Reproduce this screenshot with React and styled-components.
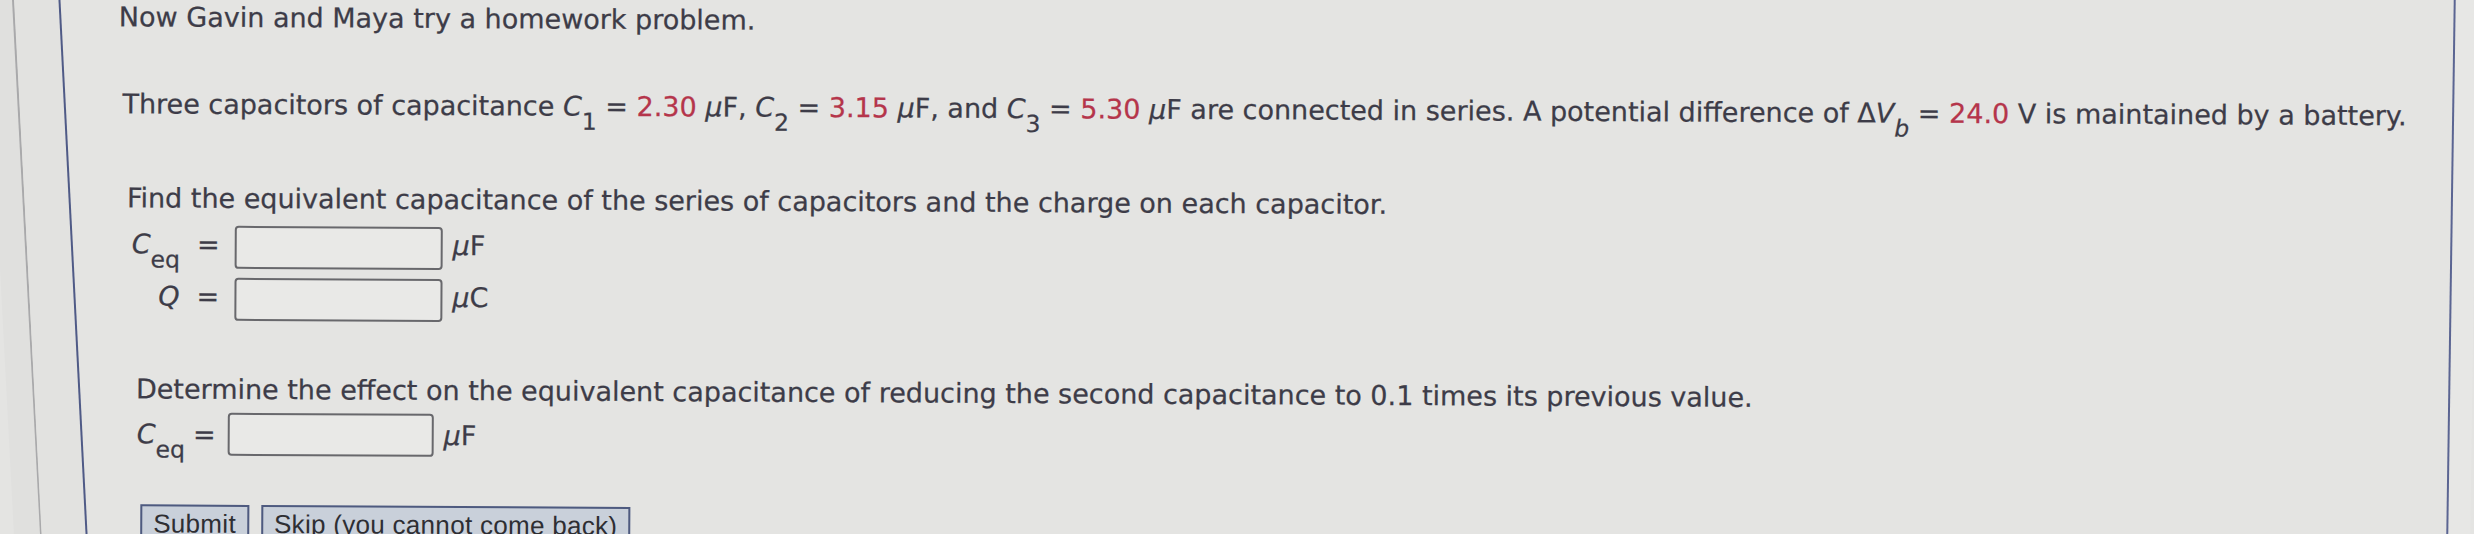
import React from "react";
import styled, { createGlobalStyle } from "styled-components";

const GlobalStyle = createGlobalStyle`
  html, body { margin: 0; padding: 0; background: #e4e4e2; }
  body { font-family: "DejaVu Sans", Verdana, sans-serif; }
`;

const Page = styled.div`
  display: flex;
  width: 2474px;
  height: 534px;
  overflow: hidden;
  background: #e4e4e2;
`;

const Gutter = styled.div`
  flex: none;
  width: ${(p) => p.$w}px;
  background: ${(p) => p.$bg};
  border-right: 2px solid ${(p) => p.$line};
  transform: skewX(${(p) => p.$skew}deg);
`;

const RightGutter = styled.div`
  flex: none;
  width: 22px;
  background: #e7e7e5;
  border-left: 2px solid #5b6592;
  transform: skewX(-0.8deg);
`;

const Content = styled.div`
  flex: 1;
  min-width: 0;
  display: flex;
  flex-direction: column;
  align-items: flex-start;
  padding: 1px 0 0 45px;
  color: #3d3c48;
  -webkit-text-stroke: 0.25px #3d3c48;
  font-size: 27px;
  transform: rotate(0.3deg);
  transform-origin: 0 0;
`;

const Text = styled.p`
  margin: ${(p) => p.$mt}px 0 0 ${(p) => p.$indent}px;
  font-size: 27px;
  line-height: 32px;
  white-space: nowrap;
`;

const Var = styled.i`
  font-style: italic;
`;

const Sub = styled.span`
  font-size: 0.87em;
  position: relative;
  top: 0.6em;
  line-height: 0;
  font-style: ${(p) => (p.$italic ? "italic" : "normal")};
`;

const Num = styled.span`
  color: #b5354b;
  -webkit-text-stroke: 0.25px #b5354b;
`;

const Label = styled.span`
  justify-self: end;
  font-size: 27px;
  line-height: 32px;
  white-space: nowrap;
`;

const Eq = styled.span`
  font-size: 27px;
  line-height: 32px;
  padding: 0 ${(p) => p.$r}px 0 ${(p) => p.$l}px;
`;

const Unit = styled.span`
  font-size: 27px;
  line-height: 32px;
  padding-left: 10px;
  white-space: nowrap;
`;

const Field = styled.div`
  box-sizing: border-box;
  width: 100%;
  height: 43px;
  border: 2px solid #68686c;
  border-radius: 4px;
  background: #e9e9e7;
`;

const Form = styled.div`
  display: grid;
  grid-template-columns: auto auto ${(p) => p.$box}px auto;
  grid-auto-rows: 43px;
  row-gap: 9px;
  align-items: center;
  margin: ${(p) => p.$mt}px 0 0 ${(p) => p.$indent}px;

  & > ${Label}, & > ${Eq}, & > ${Unit} {
    position: relative;
    top: -${(p) => p.$lift}px;
  }
`;

const ButtonRow = styled.div`
  display: flex;
  gap: 12px;
  margin: ${(p) => p.$mt}px 0 0 ${(p) => p.$indent}px;
`;

const Button = styled.button`
  font-family: "Liberation Sans", Arial, sans-serif;
  font-size: 26px;
  letter-spacing: 0.3px;
  color: #2e2e33;
  -webkit-text-stroke: 0;
  background: #c9d0da;
  border: 2px solid #4e5a7f;
  padding: 2px 11px 6px;
  margin: 0;
  line-height: normal;
  white-space: nowrap;
`;

const MuF = ({ unit = "F" }) => (
  <>
    <Var>µ</Var>
    {unit}
  </>
);

export default function App() {
  return (
    <>
      <GlobalStyle />
      <Page>
        <Gutter $w={26} $bg="#e0e0de" $line="#a9a9ab" $skew={3} />
        <Gutter $w={44} $bg="#e2e2e0" $line="#4f5a86" $skew={2.9} />
        <Content>
          <Text $mt={0} $indent={0}>
            Now Gavin and Maya try a homework problem.
          </Text>
          <Text $mt={55} $indent={4}>
            Three capacitors of capacitance <Var>C</Var>
            <Sub>1</Sub> = <Num>2.30</Num> <MuF />, <Var>C</Var>
            <Sub>2</Sub> = <Num>3.15</Num> <MuF />, and <Var>C</Var>
            <Sub>3</Sub> = <Num>5.30</Num> <MuF /> are connected in series. A
            potential difference of Δ<Var>V</Var>
            <Sub $italic>b</Sub> = <Num>24.0</Num> V is maintained by a
            battery.
          </Text>
          <Text $mt={62} $indent={9}>
            Find the equivalent capacitance of the series of capacitors and the
            charge on each capacitor.
          </Text>
          <Form $mt={11} $indent={14} $box={208} $lift={3}>
            <Label>
              <Var>C</Var>
              <Sub>eq</Sub>
            </Label>
            <Eq $l={17} $r={15}>=</Eq>
            <Field />
            <Unit>
              <MuF />
            </Unit>
            <Label>
              <Var>Q</Var>
            </Label>
            <Eq $l={17} $r={15}>=</Eq>
            <Field />
            <Unit>
              <MuF unit="C" />
            </Unit>
          </Form>
          <Text $mt={53} $indent={19}>
            Determine the effect on the equivalent capacitance of reducing the
            second capacitance to 0.1 times its previous value.
          </Text>
          <Form $mt={7} $indent={20} $box={206} $lift={0}>
            <Label>
              <Var>C</Var>
              <Sub>eq</Sub>
            </Label>
            <Eq $l={8} $r={12}>=</Eq>
            <Field />
            <Unit>
              <MuF />
            </Unit>
          </Form>
          <ButtonRow $mt={49} $indent={24}>
            <Button type="button">Submit</Button>
            <Button type="button">Skip (you cannot come back)</Button>
          </ButtonRow>
        </Content>
        <RightGutter />
      </Page>
    </>
  );
}
